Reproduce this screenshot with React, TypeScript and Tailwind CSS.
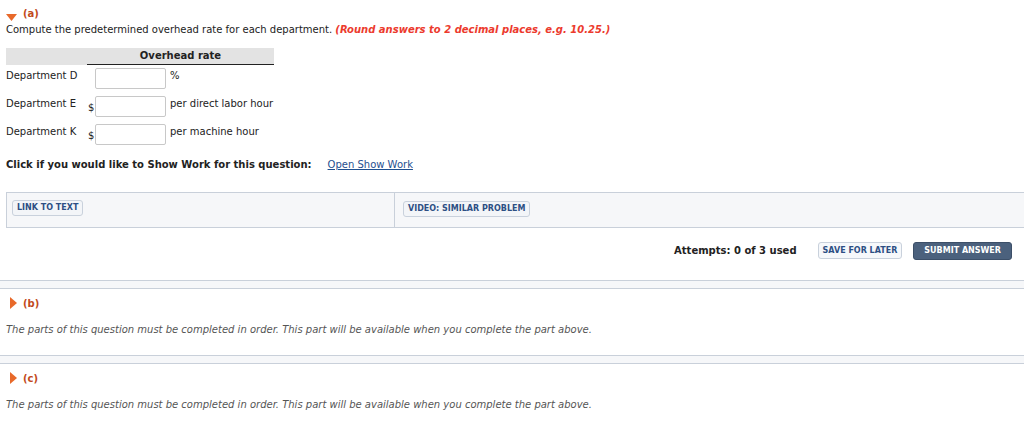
const font = { fontFamily: '"DejaVu Sans", Verdana, sans-serif' }

function DownTriangle() {
  return (
    <svg width="11" height="7" viewBox="0 0 11 7" className="mr-[6px]">
      <polygon points="0,0 11,0 5.5,7" fill="#e8692a" />
    </svg>
  )
}

function RightTriangle() {
  return (
    <svg width="7" height="12" viewBox="0 0 7 12" className="mr-[6px]">
      <polygon points="0,0 7,6 0,12" fill="#e8692a" />
    </svg>
  )
}

function SmallButton({ children, className = '' }: { children: React.ReactNode; className?: string }) {
  return (
    <button className={`rounded-[3px] border border-[#c9d1dc] bg-[#f3f5f8] px-[4px] text-[8px] font-bold leading-[14px] text-[#2d4f84] ${className}`}>
      {children}
    </button>
  )
}

function Row({ label, prefix, unit }: { label: string; prefix?: string; unit: string }) {
  return (
    <div className="flex h-[28px] items-start whitespace-nowrap">
      <div className="w-[82px] pt-[4px] leading-[14px]">{label}</div>
      <div className="relative w-[7px]">
        {prefix && <span className="absolute left-0 top-[8px] leading-[14px]">{prefix}</span>}
      </div>
      <div className="mt-[3px] h-[21px] w-[71px] rounded-[2px] border border-[#c8c8c8] bg-white" />
      <div className="ml-[4px] pt-[4px] leading-[14px]">{unit}</div>
    </div>
  )
}

function LockedPart({ letter }: { letter: string }) {
  return (
    <div>
      <div className="h-[9px] border-y border-[#c9d0da] bg-[#f6f7f9]" />
      <div className="flex h-[27px] items-center pl-[10px] pt-[1px]">
        <RightTriangle />
        <span className="text-[10px] font-bold text-[#c24a1c]">({letter})</span>
      </div>
      <div className="pl-[6px] text-[10px] italic leading-[27px] text-[#555]">
        The parts of this question must be completed in order. This part will be available when you complete the part above.
      </div>
      <div className="h-[12px]" />
    </div>
  )
}

export default function App() {
  return (
    <div style={font} className="h-[423px] w-[1024px] overflow-hidden bg-white text-[10px] text-[#222]">
      <div className="flex h-[21px] items-end pl-[6px]">
        <DownTriangle />
        <span className="font-bold leading-[14px] text-[#c24a1c]">(a)</span>
      </div>
      <div className="pl-[6px] pt-[2px] leading-[14px]">
        Compute the predetermined overhead rate for each department.{' '}
        <span className="font-bold italic text-[#ec3a2d]">(Round answers to 2 decimal places, e.g. 10.25.)</span>
      </div>

      <div className="ml-[6px] mt-[11px] w-[268px]">
        <div className="flex h-[17px] bg-[#e3e3e3]">
          <div className="w-[81px]" />
          <div className="flex-1 border-b border-[#222] text-center font-bold leading-[16px]">Overhead rate</div>
        </div>
        <div>
          <Row label="Department D" unit="%" />
          <Row label="Department E" prefix="$" unit="per direct labor hour" />
          <Row label="Department K" prefix="$" unit="per machine hour" />
        </div>
      </div>

      <div className="mt-[9px] flex pl-[6px] leading-[14px]">
        <span className="font-bold">Click if you would like to Show Work for this question:</span>
        <a className="ml-[16px] text-[#1f4f8f] underline">Open Show Work</a>
      </div>

      <div className="ml-[6px] mt-[20px] flex h-[36px] border-y border-[#c9d0da] bg-[#f6f7f9]">
        <div className="w-[389px] border-x border-[#c9d0da] pl-[5px] pt-[6px]">
          <SmallButton>LINK TO TEXT</SmallButton>
        </div>
        <div className="flex-1 pl-[8px] pt-[7px]">
          <SmallButton>VIDEO: SIMILAR PROBLEM</SmallButton>
        </div>
      </div>

      <div className="mt-[13px] flex h-[19px] items-center justify-end pr-[12px]">
        <span className="mr-[21px] font-bold">Attempts: 0 of 3 used</span>
        <SmallButton className="h-[17px] bg-[#f6f8fb] px-[3px]">SAVE FOR LATER</SmallButton>
        <button className="ml-[11px] h-[18px] rounded-[3px] border border-[#3c4f68] bg-[#4b617d] px-[10px] text-[8px] font-bold text-white">
          SUBMIT ANSWER
        </button>
      </div>

      <div className="h-[20px]" />
      <LockedPart letter="b" />
      <LockedPart letter="c" />
    </div>
  )
}
